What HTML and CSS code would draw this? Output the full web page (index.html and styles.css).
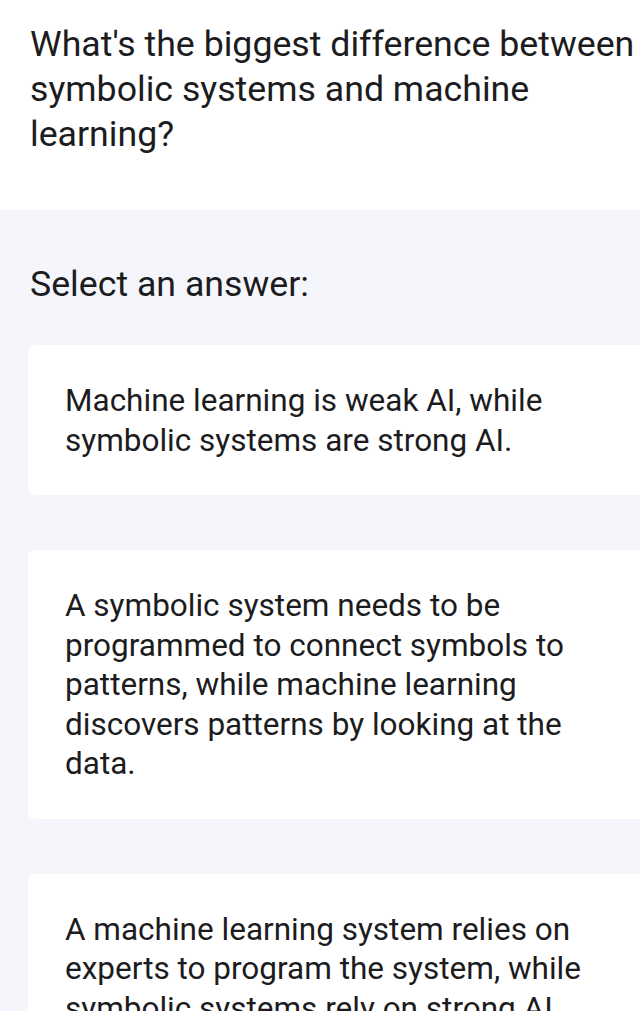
FILE: index.html
```html
<!DOCTYPE html>
<html lang="en">
<head>
<meta charset="utf-8">
<link rel="stylesheet" href="styles.css">
</head>
<body>
<div class="page">
  <section class="question">
    <h1 class="question-text">What's the biggest difference between symbolic systems and machine learning?</h1>
  </section>
  <section class="answers">
    <h2 class="answers-title">Select an answer:</h2>
    <div class="options">
      <div class="option">Machine learning is weak AI, while symbolic systems are strong AI.</div>
      <div class="option">A symbolic system needs to be programmed to connect symbols to patterns, while machine learning discovers patterns by looking at the data.</div>
      <div class="option">A machine learning system relies on experts to program the system, while symbolic systems rely on strong AI to make decisions.</div>
    </div>
  </section>
</div>
</body>
</html>
```
FILE: styles.css
```css
* { box-sizing: border-box; }
html, body { margin: 0; padding: 0; }
body {
  font-family: Roboto, "Liberation Sans", Arial, sans-serif;
  color: #1c1c1e;
  background: #f5f6fc;
  overflow: hidden;
  height: 1011px;
}
.page { width: 640px; height: 1011px; overflow: hidden; }
.question {
  background: #ffffff;
  padding: 22px 0 53px 30px;
}
.question-text {
  margin: 0;
  font-size: 35.7px;
  font-weight: 400;
  line-height: 45px;
}
.answers {
  background: #f5f6fc;
  padding: 52px 0 0 28px;
}
.answers-title {
  margin: 0 0 0 2px;
  font-size: 35.7px;
  font-weight: 400;
  line-height: 45px;
}
.options {
  margin-top: 38px;
  display: flex;
  flex-direction: column;
  gap: 55px;
  width: 660px;
}
.option {
  background: #ffffff;
  border-radius: 6px;
  padding: 36px 104px 35px 37px;
  font-size: 31.5px;
  line-height: 39.5px;
}
```
